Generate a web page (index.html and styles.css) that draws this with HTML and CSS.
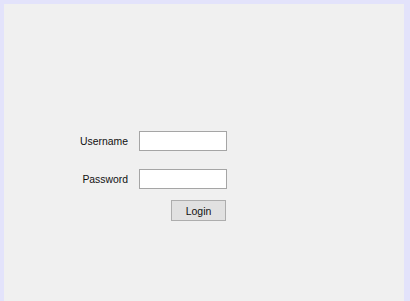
FILE: index.html
```html
<!DOCTYPE html>
<html lang="en">
<head>
  <meta charset="UTF-8">
  <meta name="viewport" content="width=device-width, initial-scale=1.0">
  <title>Login</title>
  <link rel="stylesheet" href="styles.css">
</head>
<body>
  <div class="window">
    <form class="login-form">
      <label class="field-label" for="username">Username</label>
      <input class="field-input" type="text" id="username">
      <label class="field-label" for="password">Password</label>
      <input class="field-input" type="password" id="password">
      <button class="login-button" type="button">Login</button>
    </form>
  </div>
</body>
</html>
```

FILE: styles.css
```css
html, body {
  height: 100%;
}

body {
  margin: 0;
  padding: 0;
  background: #e3e3fb;
  font-family: 'Liberation Sans', Arial, sans-serif;
  font-size: 11px;
  color: #000;
  overflow: hidden;
}

.window {
  box-sizing: border-box;
  margin: 4px 6px 0 4px;
  height: calc(100% - 4px);
  background: #f0f0f0;
  padding-top: 127px;
}

.login-form {
  display: grid;
  grid-template-columns: 54px 88px;
  grid-template-rows: 20px 20px 21px;
  column-gap: 11px;
  row-gap: 18px;
  margin-left: 70px;
  align-items: center;
}

.field-label {
  text-align: right;
  line-height: 20px;
  padding-top: 1px;
  font-size: 10.4px;
  color: #111;
}

.field-input {
  box-sizing: border-box;
  width: 88px;
  height: 20px;
  margin: 0;
  padding: 1px 3px;
  border: 1px solid #a5a5a5;
  background: #fff;
  font-family: inherit;
  font-size: 11px;
  outline: none;
}

.login-button {
  grid-column: 2;
  justify-self: end;
  align-self: start;
  box-sizing: border-box;
  width: 55px;
  height: 21px;
  margin: -7px 1px 0 0;
  padding: 0;
  border: 1px solid #adadad;
  background: #e1e1e1;
  font-family: inherit;
  font-size: 10.5px;
  color: #111;
}
```
